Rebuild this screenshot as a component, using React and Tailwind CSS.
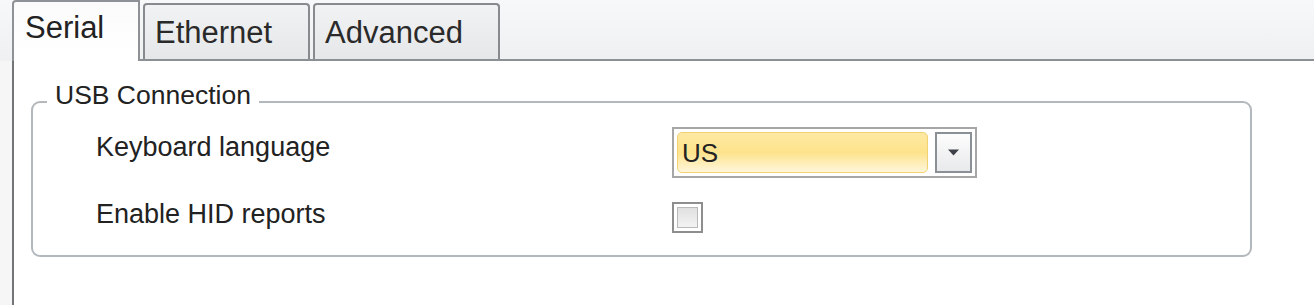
import React from "react";

const font = { fontFamily: '"Liberation Sans", Arial, sans-serif' };

function Tab({ label, width }) {
  return (
    <div
      className={`ml-[3px] h-[56px] ${width} rounded-t-[4px] border-2 border-b-0 border-[#878a8e] bg-gradient-to-b from-[#f1f2f4] to-[#e6e7e9] pl-[10px] pt-[10px] text-[31px] leading-[36px] text-[#2a2a2a]`}
    >
      {label}
    </div>
  );
}

function Combo({ value }) {
  return (
    <div className="flex h-[51px] w-[305px] gap-[7px] border-2 border-[#a6a6a6] bg-white p-[3px]">
      <div className="flex h-[41px] w-[251px] items-center rounded-[5px] border-[1.5px] border-[#f1d170] bg-gradient-to-b from-[#fde9a3] via-[#fde38b] to-[#fff6da] pl-[4px] text-[26px] leading-[30px] text-[#222]">
        {value}
      </div>
      <div className="flex h-[41px] w-[37px] items-center justify-center border-2 border-[#8b9096] bg-gradient-to-b from-[#fdfdfd] to-[#e8e9eb]">
        <svg width="11" height="7" viewBox="0 0 11 7">
          <polygon points="0,0.5 11,0.5 5.5,6.5" fill="#3d4147" />
        </svg>
      </div>
    </div>
  );
}

function Checkbox() {
  return (
    <div className="h-[31px] w-[31px] border-2 border-[#8e8e8e] bg-white p-[3px]">
      <div className="h-full w-full border border-[#b9b9b9] bg-gradient-to-b from-[#e0e0e0] to-[#f3f3f3]" />
    </div>
  );
}

export default function App() {
  return (
    <div className="flex h-[305px] w-full flex-col overflow-hidden bg-[#f6f6f7]" style={font}>
      {/* TAB STRIP */}
      <div className="flex h-[61px] bg-gradient-to-b from-[#f7f8f9] to-[#eff0f2]">
        <div className="ml-[12px] h-[61px] w-[128px] rounded-tl-[4px] border-2 border-b-0 border-[#8e9195] bg-gradient-to-b from-[#fbfbfb] to-white pl-[11px] pt-[8px] text-[31px] leading-[36px] text-[#222]">
          Serial
        </div>
        <div className="flex h-[61px] flex-1 items-end border-b-2 border-[#8c8f93]">
          <Tab label="Ethernet" width="w-[167px]" />
          <Tab label="Advanced" width="w-[187px]" />
        </div>
      </div>

      {/* PANEL */}
      <div className="ml-[12px] flex-1 border-l-2 border-[#727578] bg-white pl-[17px] pt-[40px]">
        <div className="relative h-[156px] w-[1221px] rounded-[9px] border-2 border-[#b3b8bd]">
          <span className="absolute left-[14px] top-[-23px] bg-white px-[8px] text-[26.5px] leading-[30px] text-[#222]">
            USB Connection
          </span>

          <div className="pl-[63px] pt-[24px] text-[27px] leading-[30px] text-[#222]">
            <div className="flex items-start">
              <div className="mt-[5px] w-[576px]">Keyboard language</div>
              <Combo value="US" />
            </div>
            <div className="mt-[24px] flex items-start">
              <div className="mt-[-3px] w-[576px]">Enable HID reports</div>
              <Checkbox />
            </div>
          </div>
        </div>
      </div>
    </div>
  );
}
